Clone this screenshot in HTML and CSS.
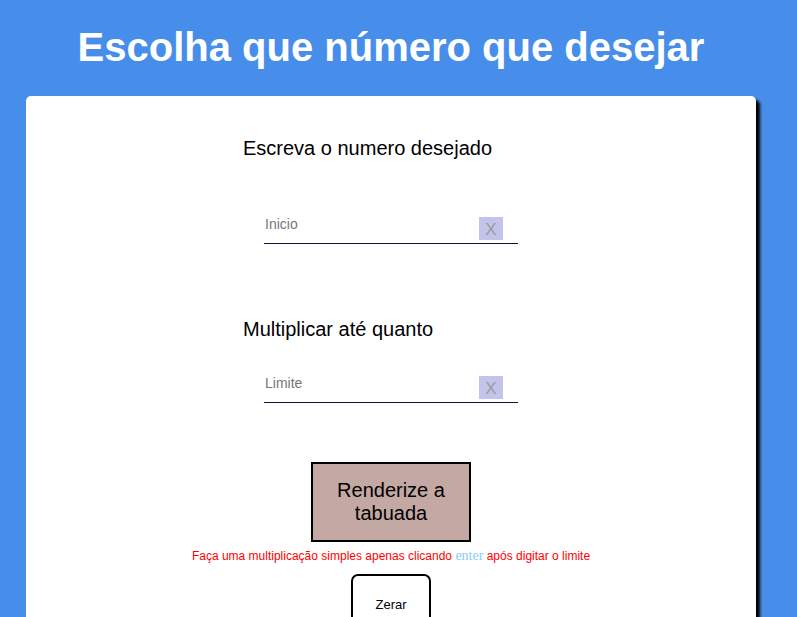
FILE: index.html
```html
<!DOCTYPE html>
<html lang="pt">
<head>
<meta charset="utf-8">
<title>Tabuada</title>
<link rel="stylesheet" href="styles.css">
</head>
<body>
<div class="page">
  <h1 class="title">Escolha que número que desejar</h1>
  <main class="card">
    <div class="form">
      <label class="label label-first">Escreva o numero desejado</label>
      <div class="field field-first">
        <input class="input" type="text" placeholder="Inicio">
        <button class="clear" type="button">X</button>
      </div>
      <label class="label label-second">Multiplicar até quanto</label>
      <div class="field field-second">
        <input class="input" type="text" placeholder="Limite">
        <button class="clear" type="button">X</button>
      </div>
    </div>
    <button class="render" type="button">Renderize a tabuada</button>
    <p class="note">Faça uma multiplicação simples apenas clicando <span class="key">enter</span> após digitar o limite</p>
    <button class="reset" type="button">Zerar</button>
  </main>
</div>
</body>
</html>
```
FILE: styles.css
```css
html, body {
  margin: 0;
  padding: 0;
  height: 100%;
  overflow: hidden;
}
body {
  background: #468eea;
  font-family: "Liberation Sans", Arial, sans-serif;
}
.page {
  width: 730px;
  margin-left: 26px;
  display: flex;
  flex-direction: column;
}
.title {
  margin: 0;
  padding-top: 23px;
  height: 96px;
  box-sizing: border-box;
  text-align: center;
  color: #fff;
  font-size: 40px;
  line-height: 48px;
  font-weight: bold;
}
.card {
  background: #fff;
  border-radius: 5px;
  box-shadow: 4px 4px 3px #000;
  min-height: 600px;
  display: flex;
  flex-direction: column;
  align-items: center;
}
.form {
  width: 296px;
  display: flex;
  flex-direction: column;
}
.label {
  font-size: 20px;
  line-height: 23px;
  color: #000;
}
.label-first { margin-top: 41px; }
.label-second { margin-top: 74px; }
.field {
  margin: 0 21px;
  display: flex;
  align-items: center;
  border-bottom: 1px solid #1e0a3c;
  height: 30px;
}
.field-first { margin-top: 53px; }
.field-second { margin-top: 31px; }
.input {
  flex: 1;
  min-width: 0;
  border: none;
  outline: none;
  background: transparent;
  padding: 0 0 0 1px;
  font-family: "Liberation Sans", Arial, sans-serif;
  font-size: 14px;
  align-self: flex-start;
  height: 16px;
  margin-top: 3px;
}
.input::placeholder { color: #777; }
.clear {
  width: 24px;
  height: 23px;
  margin-right: 15px;
  margin-top: 4px;
  padding: 0;
  border: none;
  background: #c4c3ec;
  color: #9a9a9a;
  font-family: "Liberation Sans", Arial, sans-serif;
  font-size: 17px;
  line-height: 25px;
  align-self: flex-start;
}
.render {
  margin-top: 59px;
  width: 160px;
  height: 80px;
  border: 2px solid #000;
  background: #c4a8a3;
  font-family: "Liberation Sans", Arial, sans-serif;
  font-size: 20px;
  line-height: 23px;
  color: #000;
  padding: 0 10px;
}
.note {
  margin: 7px 0 0;
  font-size: 12px;
  line-height: 14px;
  color: #ff0000;
}
.key {
  font-family: "Liberation Serif", "Times New Roman", serif;
  color: #87cefa;
  font-size: 14px;
}
.reset {
  margin-top: 11px;
  width: 80px;
  height: 60px;
  border: 2px solid #000;
  border-radius: 7px;
  background: #fff;
  font-family: "Liberation Sans", Arial, sans-serif;
  font-size: 13px;
  color: #000;
  padding: 0;
}
```
